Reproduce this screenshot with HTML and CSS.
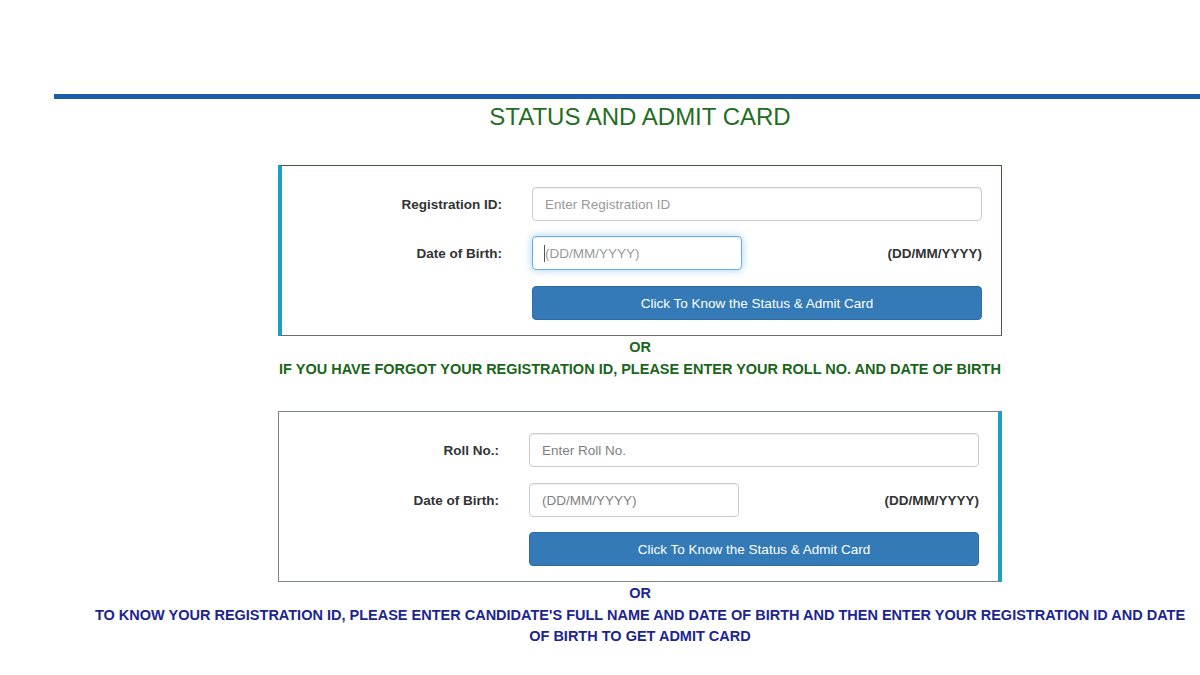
FILE: index.html
```html
<!DOCTYPE html>
<html lang="en">
<head>
<meta charset="utf-8">
<title>Status and Admit Card</title>
<link rel="stylesheet" href="styles.css">
</head>
<body>
<div class="page">
  <h1 class="title">STATUS AND ADMIT CARD</h1>

  <form class="card card-left">
    <label class="label" for="regid">Registration ID:</label>
    <div class="field">
      <input class="control full" id="regid" type="text" placeholder="Enter Registration ID">
    </div>
    <label class="label" for="dob1">Date of Birth:</label>
    <div class="field split">
      <span class="focus-wrap"><input class="control date focused" id="dob1" type="text" placeholder="(DD/MM/YYYY)"></span>
      <span class="hint">(DD/MM/YYYY)</span>
    </div>
    <span></span>
    <div class="field nudge">
      <button type="button" class="btn">Click To Know the Status &amp; Admit Card</button>
    </div>
  </form>

  <p class="or green">OR</p>
  <p class="note green">IF YOU HAVE FORGOT YOUR REGISTRATION ID, PLEASE ENTER YOUR ROLL NO. AND DATE OF BIRTH</p>

  <form class="card card-right">
    <label class="label" for="roll">Roll No.:</label>
    <div class="field">
      <input class="control full dim" id="roll" type="text" placeholder="Enter Roll No.">
    </div>
    <label class="label nudge" for="dob2">Date of Birth:</label>
    <div class="field split nudge">
      <input class="control date dim" id="dob2" type="text" placeholder="(DD/MM/YYYY)">
      <span class="hint">(DD/MM/YYYY)</span>
    </div>
    <span></span>
    <div class="field">
      <button type="button" class="btn">Click To Know the Status &amp; Admit Card</button>
    </div>
  </form>

  <p class="or blue">OR</p>
  <p class="note blue wide">TO KNOW YOUR REGISTRATION ID, PLEASE ENTER CANDIDATE'S FULL NAME AND DATE OF BIRTH AND THEN ENTER YOUR REGISTRATION ID AND DATE OF BIRTH TO GET ADMIT CARD</p>
</div>
</body>
</html>
```

FILE: styles.css
```css
html, body {
  margin: 0;
  padding: 0;
  background: #ffffff;
  overflow: hidden;
}

body {
  font-family: "Liberation Sans", Arial, sans-serif;
  font-size: 14px;
  color: #333333;
}

.page {
  margin: 94px 0 0 54px;
  width: 1172px;
  border-top: 5px solid #1b5cab;
  padding-top: 4px;
  display: flex;
  flex-direction: column;
  align-items: center;
}

.title {
  margin: 0;
  font-size: 24px;
  line-height: 28px;
  font-weight: normal;
  color: #1f6e22;
  text-align: center;
}

.card {
  margin-top: 34px;
  width: 724px;
  box-sizing: border-box;
  display: grid;
  grid-template-columns: 220px 450px;
  column-gap: 30px;
  row-gap: 15px;
  align-items: center;
  padding: 21px 19px 15px 0;
  background: #ffffff;
}

.nudge {
  margin-top: 1px;
}

.card-left {
  border: 1px solid #3f5f3b;
  border-bottom-color: #6b6b6b;
  border-left: 4px solid #1aa0c4;
}

.card-right {
  margin-top: 31px;
  border: 1px solid #7c877c;
  border-right: 4px solid #1aa0c4;
  padding-right: 19px;
}

.label {
  text-align: right;
  font-weight: bold;
  font-size: 13.5px;
  color: #333333;
}

.field {
  display: flex;
  align-items: center;
}

.split {
  justify-content: space-between;
}

.control {
  height: 34px;
  box-sizing: border-box;
  padding: 6px 12px;
  border: 1px solid #cccccc;
  border-radius: 4px;
  font-family: "Liberation Sans", Arial, sans-serif;
  font-size: 13.5px;
  color: #555555;
  background: #ffffff;
  box-shadow: inset 0 1px 1px rgba(0, 0, 0, 0.075);
  outline: none;
}

.control::placeholder {
  color: #999999;
}

.control.dim::placeholder {
  color: #7f7f7f;
}

.full {
  width: 450px;
}

.date {
  width: 210px;
}

.focus-wrap {
  position: relative;
  display: inline-flex;
}

.focus-wrap::before {
  content: "";
  position: absolute;
  left: 12px;
  top: 9px;
  width: 1px;
  height: 17px;
  background: #555555;
}

.focused {
  border-color: #66afe9;
  box-shadow: inset 0 1px 1px rgba(0, 0, 0, 0.075), 0 0 8px rgba(102, 175, 233, 0.6);
}

.hint {
  font-weight: bold;
  font-size: 13.5px;
  color: #333333;
}

.btn {
  width: 450px;
  height: 34px;
  box-sizing: border-box;
  border: 1px solid #2e6da4;
  border-radius: 4px;
  background: #337ab7;
  color: #ffffff;
  font-family: "Liberation Sans", Arial, sans-serif;
  font-size: 13.5px;
  padding: 0;
}

.or,
.note {
  margin: 0;
  font-weight: bold;
  font-size: 14.5px;
  line-height: 22px;
  text-align: center;
}

.green {
  color: #1a651a;
}

.blue {
  color: #1b2591;
}

.wide {
  width: 1110px;
  line-height: 21px;
  margin-top: 1px;
}
```
